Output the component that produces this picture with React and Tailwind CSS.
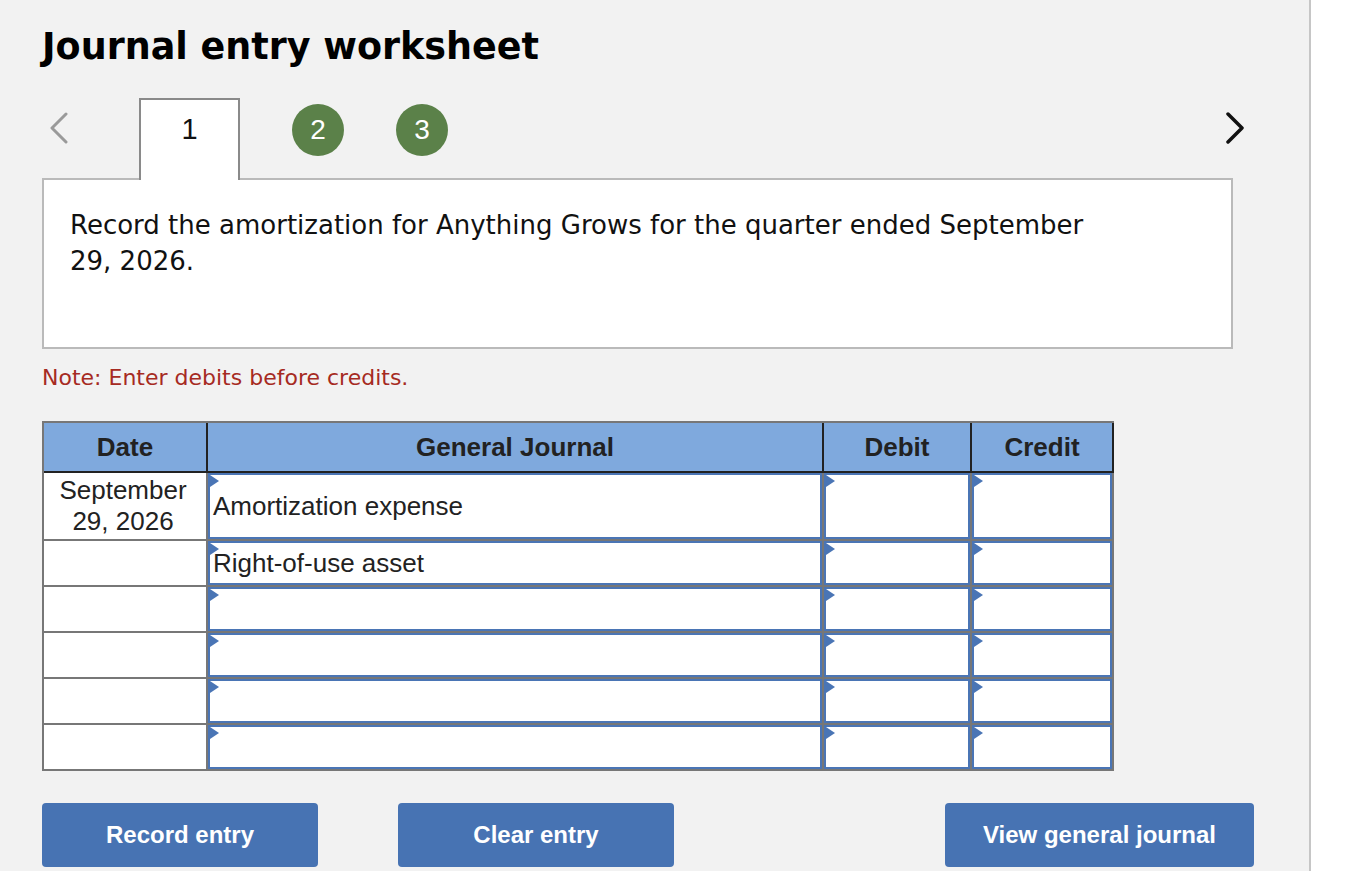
import React from 'react';

const rows = [
  { date: ['September', '29, 2026'], account: 'Amortization expense', tall: true },
  { account: 'Right-of-use asset' },
  {},
  {},
  {},
  {},
];

const Marker = () => (
  <svg className="absolute left-0 top-0" width="9" height="12" viewBox="0 0 9 12">
    <polygon points="0,0 9,6 0,12" fill="#4a75b5" />
  </svg>
);

const InputCell = ({ width, children }) => (
  <div className={`${width} border-r-2 border-[#777]`}>
    <div className="relative h-full bg-white border-2 border-[#4a75b5] flex items-center pl-[3px]">
      <Marker />
      {children}
    </div>
  </div>
);

const App = () => {
  return (
    <div className="flex min-h-screen bg-white">
      <div className="w-[1311px] min-h-[871px] bg-[#f2f2f2] border-r-2 border-[#c6c6c6] pl-[42px]">
        <h1 className="pt-[26px] text-[36.5px] leading-[42px] font-bold text-black font-['DejaVu_Sans',sans-serif]">
          Journal entry worksheet
        </h1>

        {/* tabs */}
        <div className="flex items-start w-[1210px] mt-[30px] font-['Liberation_Sans',Arial,sans-serif]">
          <svg className="ml-[8px] mt-[14px]" width="18" height="32" viewBox="0 0 18 32">
            <polyline points="16,2 2,16 16,30" fill="none" stroke="#9a9a9a" strokeWidth="3" strokeLinecap="round" strokeLinejoin="round" />
          </svg>
          <div className="relative z-10 ml-[71px] -mb-[2px] w-[101px] h-[82px] bg-white border-2 border-b-0 border-[#8a8a8a] pt-[13px] text-center text-[29px] leading-[32px] text-[#111]">
            1
          </div>
          <div className="ml-[52px] mt-[6px] w-[52px] h-[52px] rounded-full bg-[#5b8149] flex items-center justify-center text-white text-[28px]">
            2
          </div>
          <div className="ml-[52px] mt-[6px] w-[52px] h-[52px] rounded-full bg-[#5b8149] flex items-center justify-center text-white text-[28px]">
            3
          </div>
          <svg className="ml-auto mr-[8px] mt-[14px]" width="18" height="32" viewBox="0 0 18 32">
            <polyline points="2,2 16,16 2,30" fill="none" stroke="#111" strokeWidth="3.5" strokeLinecap="round" strokeLinejoin="round" />
          </svg>
        </div>

        <div className="w-[1191px] h-[171px] bg-white border-2 border-[#bababa] pl-[26px] pt-[27px]">
          <p className="text-[26px] leading-[36px] text-[#111] font-['DejaVu_Sans',sans-serif]">
            Record the amortization for Anything Grows for the quarter ended September
            <br />
            29, 2026.
          </p>
        </div>

        <p className="mt-[14px] text-[22px] leading-[30px] text-[#a62a22] font-['DejaVu_Sans',sans-serif]">
          Note: Enter debits before credits.
        </p>

        {/* journal table */}
        <div className="mt-[28px] w-[1072px] border-t-2 border-l-2 border-[#777] font-['Liberation_Sans',Arial,sans-serif] text-[26px] text-[#222]">
          <div className="flex h-[50px] bg-[#7fa9dd] border-b-2 border-[#222] font-bold">
            <div className="w-[164px] border-r-2 border-[#222] flex items-center justify-center">Date</div>
            <div className="w-[616px] border-r-2 border-[#222] flex items-center justify-center">General Journal</div>
            <div className="w-[148px] border-r-2 border-[#222] flex items-center justify-center">Debit</div>
            <div className="w-[142px] border-r-2 border-[#222] flex items-center justify-center">Credit</div>
          </div>
          {rows.map((row, i) => (
            <div key={i} className={`flex bg-white border-b-2 border-[#777] ${row.tall ? 'h-[68px]' : 'h-[46px]'}`}>
              <div className="w-[164px] border-r-2 border-[#777] pr-[4px] flex flex-col items-center justify-center leading-[31px] text-center">
                {row.date && row.date.map((d) => <span key={d}>{d}</span>)}
              </div>
              <InputCell width="w-[616px]">{row.account}</InputCell>
              <InputCell width="w-[148px]" />
              <InputCell width="w-[142px]" />
            </div>
          ))}
        </div>

        <div className="flex mt-[32px] font-['Liberation_Sans',Arial,sans-serif] text-[24px] font-bold text-white">
          <button className="w-[276px] h-[64px] rounded-[4px] bg-[#4773b3]">Record entry</button>
          <button className="ml-[80px] w-[276px] h-[64px] rounded-[4px] bg-[#4773b3]">Clear entry</button>
          <button className="ml-[271px] w-[309px] h-[64px] rounded-[4px] bg-[#4773b3]">View general journal</button>
        </div>
      </div>
      <div className="flex-1 bg-white" />
    </div>
  );
};

export default App;
